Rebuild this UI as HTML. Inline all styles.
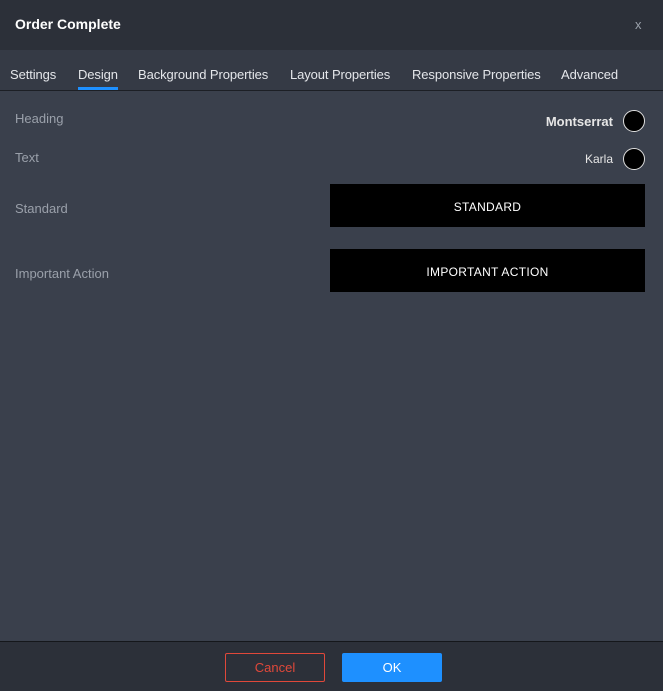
<!DOCTYPE html>
<html><head><style>
*{margin:0;padding:0;box-sizing:border-box}
body{width:663px;height:691px;background:#3a404c;font-family:"Liberation Sans",sans-serif;position:relative;overflow:hidden}
.hdr{position:absolute;left:0;top:0;width:663px;height:50px;background:#2c3039}
.hdr .t{position:absolute;left:15px;top:16px;color:#fff;font-weight:bold;font-size:14px}
.hdr .x{position:absolute;left:635px;top:17px;color:#9aa0aa;font-size:13px}
.tabs{position:absolute;left:0;top:50px;width:663px;height:41px;background:#353a45;border-bottom:1px solid #1c1f25}
.tab{position:absolute;top:17px;color:#e4e6ea;font-size:13px;letter-spacing:-0.1px}
.ul{position:absolute;left:78px;top:37px;width:40px;height:3px;background:#1e90ff}
.lbl{position:absolute;left:15px;color:#9aa0aa;font-size:13px}
.r{position:absolute;right:50px;color:#e6e6e6;font-size:12px;text-align:right}
.dot{position:absolute;left:623px;width:22px;height:22px;border-radius:50%;background:#000;border:1.5px solid #ddd}
.btn{position:absolute;left:330px;width:315px;height:43px;background:#000;color:#fff;font-size:12px;text-align:center;line-height:46px;letter-spacing:.3px}
.ftr{position:absolute;left:0;top:641px;width:663px;height:50px;background:#2c3039;border-top:1px solid #15171b}
.c{position:absolute;left:225px;top:11px;width:100px;height:29px;border:1px solid #e0483a;border-radius:2px;color:#e0483a;font-size:13px;text-align:center;line-height:27px}
.ok{position:absolute;left:342px;top:11px;width:100px;height:29px;background:#1e90ff;border-radius:2px;color:#fff;font-size:13px;text-align:center;line-height:29px}
</style></head><body>
<div class="hdr"><div class="t">Order Complete</div><div class="x">x</div></div>
<div class="tabs">
<span class="tab" style="left:10px">Settings</span>
<span class="tab" style="left:78px">Design</span>
<span class="tab" style="left:138px">Background Properties</span>
<span class="tab" style="left:290px">Layout Properties</span>
<span class="tab" style="left:412px">Responsive Properties</span>
<span class="tab" style="left:561px">Advanced</span>
<div class="ul"></div>
</div>
<div class="lbl" style="top:111px">Heading</div>
<div class="lbl" style="top:150px">Text</div>
<div class="lbl" style="top:201px">Standard</div>
<div class="lbl" style="top:266px">Important Action</div>
<div class="r" style="top:114px;font-weight:bold;font-size:13px">Montserrat</div>
<div class="dot" style="top:110px"></div>
<div class="r" style="top:152px">Karla</div>
<div class="dot" style="top:148px"></div>
<div class="btn" style="top:184px">STANDARD</div>
<div class="btn" style="top:249px">IMPORTANT ACTION</div>
<div class="ftr"><div class="c">Cancel</div><div class="ok">OK</div></div>
</body></html>
